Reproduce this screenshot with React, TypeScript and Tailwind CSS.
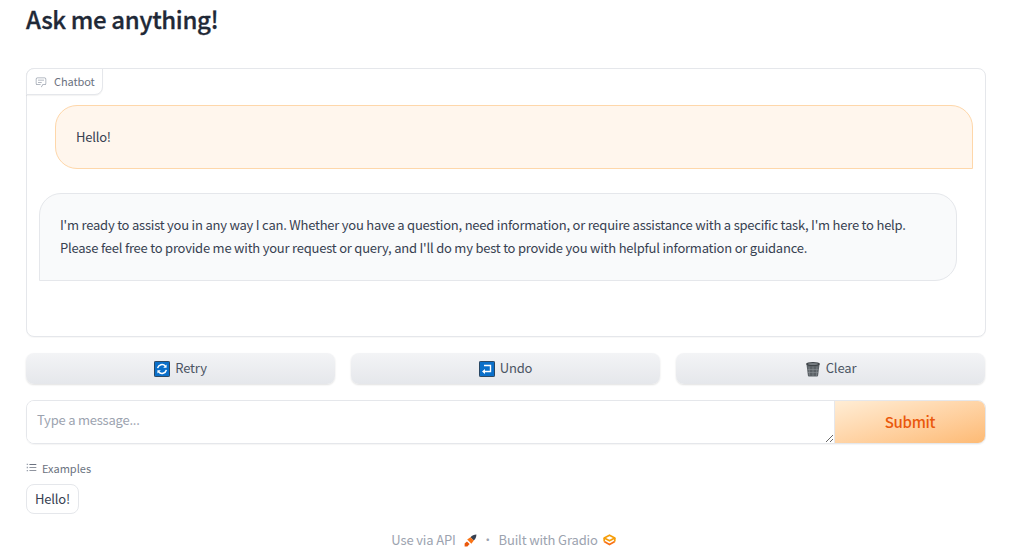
import React from "react";

const font = { fontFamily: '"Noto Sans CJK SC", "Source Sans Pro", "Noto Sans", sans-serif' };

function ChatIcon() {
  return (
    <svg width="12" height="12" viewBox="0 0 32 32" fill="#9ca3af">
      <path d="M17.74 30L16 29l4-7h6a2 2 0 0 0 2-2V8a2 2 0 0 0-2-2H6a2 2 0 0 0-2 2v12a2 2 0 0 0 2 2h9v2H6a4 4 0 0 1-4-4V8a4 4 0 0 1 4-4h20a4 4 0 0 1 4 4v12a4 4 0 0 1-4 4h-4.84z" />
      <path d="M8 10h16v2H8zM8 16h10v2H8z" />
    </svg>
  );
}

function RetryIcon() {
  return (
    <svg width="16" height="16" viewBox="0 0 16 16">
      <rect x="0.4" y="0.4" width="15.2" height="15.2" rx="1" fill="#0a6fc9" stroke="#123" strokeWidth="0.8" />
      <path d="M3.6 7.2A4.5 4.5 0 0 1 11.4 5.2" fill="none" stroke="#fff" strokeWidth="1.5" />
      <path d="M12.4 8.8A4.5 4.5 0 0 1 4.6 10.8" fill="none" stroke="#fff" strokeWidth="1.5" />
      <path d="M12.6 3.4v3.4H9.2zM3.4 12.6V9.2h3.4z" fill="#fff" />
    </svg>
  );
}

function UndoIcon() {
  return (
    <svg width="16" height="16" viewBox="0 0 16 16">
      <rect x="0.4" y="0.4" width="15.2" height="15.2" rx="1" fill="#0a6fc9" stroke="#123" strokeWidth="0.8" />
      <path d="M5 4.5h6.5v6H4.5" fill="none" stroke="#fff" strokeWidth="1.4" />
      <path d="M6 8L3 10.5 6 13z" fill="#fff" />
    </svg>
  );
}

function TrashIcon() {
  return (
    <svg width="16" height="16" viewBox="0 0 16 16">
      <path d="M1.5 3.5h13l-1.4 11a1 1 0 0 1-1 .9H3.9a1 1 0 0 1-1-.9z" fill="#5b6166" />
      <path d="M4 5.5l.6 9M8 5.5V15M12 5.5L11.4 15M2.5 8.5h11M3 11.5h10" stroke="#8b9196" strokeWidth="0.6" fill="none" />
      <ellipse cx="8" cy="3" rx="7" ry="2" fill="#3f4448" />
      <ellipse cx="8" cy="3" rx="5" ry="1" fill="#777d82" />
    </svg>
  );
}

function ListIcon() {
  return (
    <svg width="11" height="11" viewBox="0 0 32 32" fill="#6b7280">
      <path d="M10 6h20v2.4H10zM10 15h20v2.4H10zM10 24h20v2.4H10z" />
      <path d="M2 5h4v4H2zM2 14h4v4H2zM2 23h4v4H2z" fill="#9ca3af" />
    </svg>
  );
}

function RocketIcon() {
  return (
    <svg width="13" height="13" viewBox="0 0 13 13">
      <path d="M6.5 3.2C8 1.4 10 0.6 12.4 0.6 12.4 3 11.6 5 9.8 6.5z" fill="#374151" />
      <path d="M3.2 5.6L6.5 3.2 9.8 6.5 7.4 9.8z" fill="#f97316" />
      <path d="M3 7.4L5.6 10 3.4 12.4 0.6 12.4 0.6 9.6z" fill="#ea580c" />
    </svg>
  );
}

function GradioIcon() {
  return (
    <svg width="13" height="12" viewBox="0 0 13 12" fill="none">
      <path d="M6.5 1.2L11.8 4 6.5 6.8 1.2 4z" stroke="#f59e0b" strokeWidth="1.7" strokeLinejoin="round" />
      <path d="M1.2 7.6l5.3 3 5.3-3" stroke="#f97316" strokeWidth="1.7" strokeLinejoin="round" />
      <path d="M1.2 4v3.6M11.8 4v3.6" stroke="#f59e0b" strokeWidth="1.7" />
    </svg>
  );
}

function ActionButton({ icon, label }: { icon: React.ReactNode; label: string }) {
  return (
    <button className="flex h-[31px] w-[309px] items-center justify-center gap-[5px] rounded-lg bg-gradient-to-b from-[#f3f4f6] to-[#e5e7eb] text-[13px] tracking-[-0.15px] text-[#4b5563] shadow-[0_1px_2px_rgba(0,0,0,0.12)]">
      {icon}
      <span className="pb-[2px] leading-[20px]">{label}</span>
    </button>
  );
}

export default function App() {
  return (
    <div className="h-[560px] w-[1012px] overflow-hidden bg-white px-[26px]" style={font}>
      <h1 className="h-[68px] pt-[2px] text-[24px] font-medium leading-[34px] tracking-[-0.35px] text-[#1f2937] [-webkit-text-stroke:0.3px_#1f2937]">Ask me anything!</h1>

      <div className="relative h-[269px] w-[960px] rounded-lg border border-[#e5e7eb] bg-white shadow-[0_1px_1px_rgba(0,0,0,0.03)]">
        <div className="absolute -left-px -top-px flex h-[27px] w-[77px] items-center gap-[7px] rounded-br-lg rounded-tl-lg border border-[#e5e7eb] bg-white pl-[8px] text-[11px] leading-[16px] tracking-[-0.1px] text-[#6b7280] shadow-[0_1px_1px_rgba(0,0,0,0.05)]">
          <ChatIcon />
          <span className="pb-[2px]">Chatbot</span>
        </div>
        <div className="flex flex-col gap-6 pl-3 pr-3 pt-9">
          <div className="ml-4 flex h-[64px] items-center rounded-t-[22px] rounded-bl-[22px] border border-[#fed7aa] bg-[#fff6ed] px-5 pb-px text-[13px] leading-[24px] tracking-[-0.22px] text-[#374151]">
            Hello!
          </div>
          <div className="mr-4 flex h-[88px] flex-col justify-center rounded-t-[22px] rounded-br-[22px] border border-[#e5e7eb] bg-[#f9fafb] px-5 pb-[2px] text-[13px] leading-[23px] tracking-[-0.22px] text-[#374151]">
            <p>I'm ready to assist you in any way I can. Whether you have a question, need information, or require assistance with a specific task, I'm here to help.</p>
            <p>Please feel free to provide me with your request or query, and I'll do my best to provide you with helpful information or guidance.</p>
          </div>
        </div>
      </div>

      <div className="mt-4 flex w-[959px] gap-4">
        <ActionButton icon={<RetryIcon />} label="Retry" />
        <ActionButton icon={<UndoIcon />} label="Undo" />
        <ActionButton icon={<TrashIcon />} label="Clear" />
      </div>

      <div className="mt-4 flex h-[44px] w-[960px] overflow-hidden rounded-lg border border-[#e5e7eb] shadow-[0_1px_1px_rgba(0,0,0,0.04)]">
        <textarea
          className="h-full flex-1 border-r border-[#e5e7eb] bg-white px-[10px] py-[8px] text-[13px] leading-[22px] tracking-[-0.22px] text-[#374151] outline-none placeholder:text-[#9ca3af]"
          placeholder="Type a message..."
        />
        <button className="w-[150px] bg-gradient-to-br from-[#ffedd5] to-[#fdba74] pb-px text-[15px] font-medium leading-[22px] tracking-[-0.3px] text-[#ea580c]">
          Submit
        </button>
      </div>

      <div className="mt-[16px] flex h-[16px] items-center gap-[5px] pb-px text-[11px] leading-[16px] text-[#6b7280]">
        <ListIcon />
        <span>Examples</span>
      </div>
      <div className="mt-[8px] flex">
        <button className="h-[30px] w-[53px] rounded-lg border border-[#e5e7eb] bg-white pb-px text-[13px] leading-[20px] tracking-[-0.15px] text-[#374151]">Hello!</button>
      </div>

      <footer className="mt-[16px] flex h-[20px] items-center justify-center pr-[5px] text-[13px] leading-[20px] tracking-[-0.15px] text-[#9ca3af]">
        <span>Use via API</span>
        <span className="ml-[8px]"><RocketIcon /></span>
        <span className="mx-[5px] text-[12px]">·</span>
        <span>Built with Gradio</span>
        <span className="ml-[5px]"><GradioIcon /></span>
      </footer>
    </div>
  );
}
